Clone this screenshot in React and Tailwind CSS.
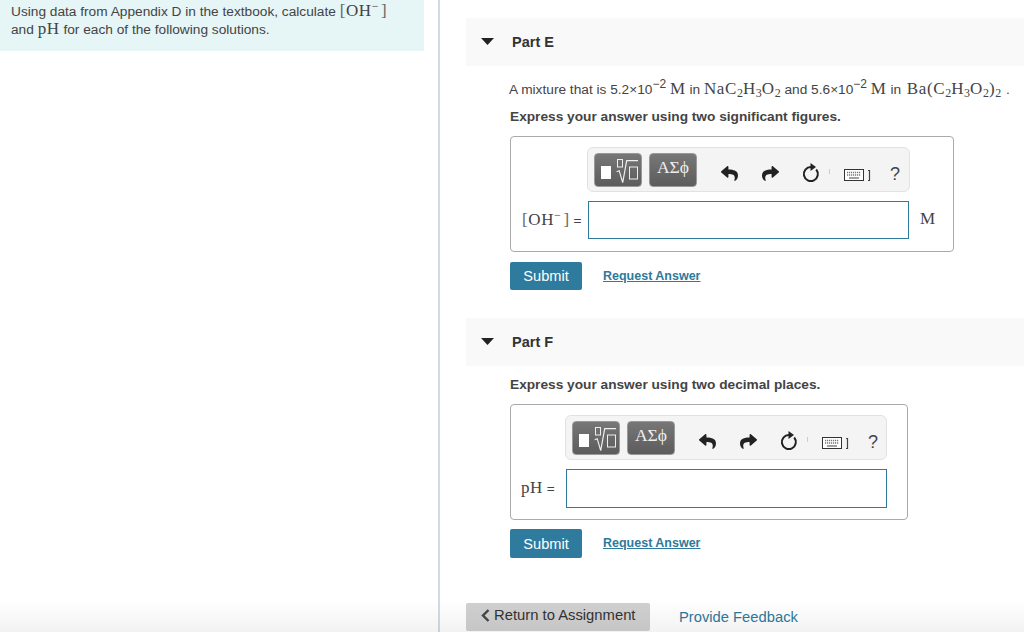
import { FaReply, FaShare } from "react-icons/fa";

const sans = { fontFamily: '"Liberation Sans", Arial, sans-serif' };

function M({ children, className = "" }) {
  return <span className={`font-['Liberation_Serif',serif] text-[17px] tracking-[0.6px] text-[#444] ${className}`}>{children}</span>;
}

function Sub({ children }) {
  return <span className="relative top-[3px] text-[12px] tracking-normal">{children}</span>;
}

function Sup({ children }) {
  return <span className="relative top-[-6px] text-[12px]">{children}</span>;
}

function OH() {
  return (
    <M>
      <span className="font-light text-[#666]">[</span>OH<Sup>−</Sup><span className="ml-[2px] font-light text-[#666]">]</span>
    </M>
  );
}

function Acetate() {
  return <>C<Sub>2</Sub>H<Sub>3</Sub>O<Sub>2</Sub></>;
}

function PartHeader({ title }) {
  return (
    <div className="h-[48px] bg-[#f9f9f9] flex items-center pl-[15px]">
      <svg width="13" height="7" viewBox="0 0 13 7" className="mt-[-2px]">
        <path d="M0 0h13L6.5 7z" fill="#222" />
      </svg>
      <span className="ml-[18px] pt-[2px] text-[14.5px] font-bold text-[#333]">{title}</span>
    </div>
  );
}

function Toolbar({ className }) {
  return (
    <div className={`h-[45px] bg-[#f4f4f4] border border-[#e2e2e2] rounded-[6px] flex items-center ${className}`}>
      <div className="w-[48px] h-[34px] ml-[6px] rounded-[4px] bg-gradient-to-b from-[#777] to-[#5c5c5c] border border-[#999]">
        <svg width="46" height="32" viewBox="1 1 46 32" fill="none">
          <rect x="7" y="13" width="10" height="13" fill="#fff" />
          <rect x="23.5" y="6.5" width="5" height="7.5" stroke="#eee" />
          <path d="M22.7 18.7l2.5-1 3.5 12L32.7 7.7H44" stroke="#eee" strokeWidth="1.2" />
          <rect x="35.5" y="14" width="8" height="12" stroke="#eee" />
        </svg>
      </div>
      <div className="w-[48px] h-[34px] ml-[7px] rounded-[4px] bg-gradient-to-b from-[#777] to-[#5c5c5c] border border-[#999] flex items-center justify-center font-['Liberation_Serif',serif] text-[17.5px] text-[#eee] pb-[4px]">
        ΑΣϕ
      </div>
      <FaReply className="ml-[24px] mt-[7px] text-[#222] w-[17px] h-[17px]" />
      <FaShare className="ml-[24px] mt-[7px] text-[#222] w-[17px] h-[17px]" />
      <svg width="18" height="20" viewBox="0 0 18 20" fill="none" className="ml-[23px] mt-[6px]">
        <path d="M14.2 6.5a7 7 0 1 1-5.2-2.5" stroke="#222" strokeWidth="2" />
        <path d="M8.5 0l5.5 4-5.5 4z" fill="#222" />
      </svg>
      <span className="ml-[9px] w-px h-[5px] bg-[#ccc] mt-[3px]" />
      <svg width="30" height="13" viewBox="0 0 30 13" fill="none" className="ml-[14px] mt-[12px]">
        <rect x="0.5" y="0.5" width="19" height="11" fill="#fff" stroke="#333" />
        <path d="M3 3.5h14M3 6h14" stroke="#777" strokeWidth="1.5" strokeDasharray="1.2 0.8" />
        <path d="M5 9h10" stroke="#777" strokeWidth="1.4" />
        <path d="M24 1.5h1.5v10H24" stroke="#444" strokeWidth="1.2" />
      </svg>
      <span className="ml-[16px] mt-[9px] text-[18px] text-[#444]">?</span>
    </div>
  );
}

function ActionRow({ height, gap }) {
  return (
    <div className={`flex items-center ${gap}`}>
      <button className={`w-[72px] ${height} bg-[#2f7b9d] rounded-[2px] text-white text-[14.6px] pt-[2px]`}>Submit</button>
      <a className="ml-[21px] text-[12.5px] font-bold text-[#2d7a9c] underline">Request Answer</a>
    </div>
  );
}

export default function App() {
  return (
    <div className="relative w-[1024px] h-[632px] overflow-hidden bg-white flex text-[#333]" style={sans}>
      {/* left instructions */}
      <div className="w-[424px] shrink-0">
        <div className="h-[51px] bg-[#e6f5f6] pl-[11px] text-[13.7px] leading-[18px] text-[#444]">
          <div className="h-[20px] pt-[2px] whitespace-nowrap">
            Using data from Appendix D in the textbook, calculate <OH />
          </div>
          <div className="whitespace-nowrap">
            and <M>pH</M> for each of the following solutions.
          </div>
        </div>
      </div>
      <div className="w-[2px] ml-[14px] bg-[#cfdce9]" />

      {/* right parts */}
      <div className="ml-[26px] flex-1 pt-[18px]">
        <PartHeader title="Part E" />
        <div className="pl-[44px]">
          <p className="mt-[11px] ml-[-1px] h-[24px] text-[13.7px] leading-[24px] text-[#444] whitespace-nowrap">
            A mixture that is 5.2×10<Sup>−2</Sup> <M>M</M> in <M>NaC<Sub>2</Sub>H<Sub>3</Sub>O<Sub>2</Sub></M> and 5.6×10<Sup>−2</Sup> <M>M</M> in <M className="ml-[2px]">Ba(<Acetate />)<Sub>2</Sub></M> <span className="ml-[1px]">.</span>
          </p>
          <p className="mt-[7px] text-[13.7px] leading-[18px] font-bold text-[#444]">Express your answer using two significant figures.</p>

          <div className="mt-[10px] w-[444px] h-[116px] border border-[#aaa] rounded-[4px] pt-[10px]">
            <Toolbar className="ml-[76px] w-[323px]" />
            <div className="flex items-center mt-[9px] pl-[11px]">
              <span className="w-[66px] whitespace-nowrap text-[13.7px] text-[#444]"><OH /> =</span>
              <div className="w-[321px] h-[38px] border border-[#2f7b9d] bg-white" />
              <M className="ml-[11px] mt-[-2px] text-[15px]">M</M>
            </div>
          </div>
          <ActionRow height="h-[28px]" gap="mt-[10px]" />
        </div>

        <div className="mt-[28px]">
          <PartHeader title="Part F" />
        </div>
        <div className="pl-[44px]">
          <p className="mt-[10px] text-[13.7px] leading-[18px] font-bold text-[#444]">Express your answer using two decimal places.</p>
          <div className="mt-[10px] w-[398px] h-[116px] border border-[#aaa] rounded-[4px] pt-[10px]">
            <Toolbar className="ml-[54px] w-[322px]" />
            <div className="flex items-center mt-[9px] pl-[10px]">
              <span className="w-[45px] whitespace-nowrap text-[13.7px] text-[#444] mt-[-2px]"><M>pH</M> =</span>
              <div className="w-[321px] h-[39px] border border-[#2f7b9d] bg-white" />
            </div>
          </div>
          <ActionRow height="h-[29px]" gap="mt-[9px]" />
        </div>

        <div className="flex items-center mt-[45px]">
          <button className="w-[184px] h-[28px] bg-[#d0d0d0] rounded-[2px] flex items-center pl-[15px] pb-[3px] text-[14.8px] text-[#333]">
            <svg width="9" height="13" viewBox="0 0 9 13" fill="none" className="mr-[4px]">
              <path d="M7.5 1L2 6.5l5.5 5.5" stroke="#444" strokeWidth="2.4" />
            </svg>
            Return to Assignment
          </button>
          <a className="ml-[29px] text-[14.75px] text-[#2d7a9c]">Provide Feedback</a>
        </div>
      </div>

      {/* fade at the bottom of the window */}
      <div className="absolute left-0 right-0 bottom-0 h-[32px] bg-gradient-to-b from-transparent to-black/5 pointer-events-none" />
    </div>
  );
}
